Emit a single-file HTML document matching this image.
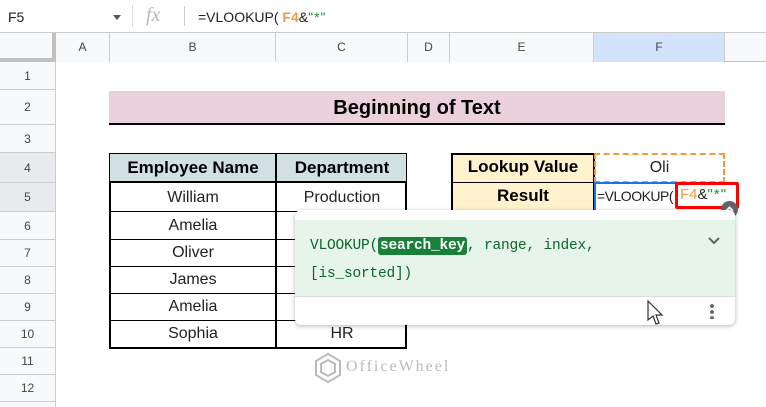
<!DOCTYPE html><html><head><style>
*{margin:0;padding:0;box-sizing:border-box}
body{width:766px;height:407px;overflow:hidden;background:#fff;font-family:"Liberation Sans",Arial,sans-serif;position:relative}
.a{position:absolute}
.hd{background:#f8f9fa;color:#444;font-size:12px;text-align:center}
.c{position:absolute;text-align:center;font-size:15px;color:#222}
</style></head><body>
<div class="a" style="left:0;top:0;width:766px;height:33px;background:#fff;border-bottom:1px solid #ccc"></div>
<div class="a" style="left:8px;top:9px;font-size:14px;color:#222">F5</div>
<div class="a" style="left:113px;top:15px;width:0;height:0;border-left:4px solid transparent;border-right:4px solid transparent;border-top:5px solid #555"></div>
<div class="a" style="left:132px;top:5px;width:1px;height:22px;background:#ddd"></div>
<div class="a" style="left:146px;top:4px;font-family:'Liberation Serif',serif;font-style:italic;font-size:20px;color:#bbb">fx</div>
<div class="a" style="left:184px;top:6px;width:1px;height:20px;background:#ccc"></div>
<div class="a" style="left:198px;top:9px;font-size:14px;color:#222">=VLOOKUP( <span style="color:#f29b3b;font-weight:bold">F4</span>&amp;<span style="color:#1e8e3e;letter-spacing:1px">"*"</span></div>
<div class="a hd" style="left:0;top:33px;width:766px;height:29px;border-bottom:1px solid #c0c0c0"></div>
<div class="a" style="left:0;top:33px;width:56px;height:29px;background:#f8f9fa;border-right:4px solid #c0c0c0;border-bottom:4px solid #c0c0c0"></div>
<div class="a hd" style="left:56px;top:33px;width:54px;height:29px;line-height:29px;border-right:1px solid #ccc">A</div>
<div class="a hd" style="left:110px;top:33px;width:166px;height:29px;line-height:29px;border-right:1px solid #ccc">B</div>
<div class="a hd" style="left:276px;top:33px;width:132px;height:29px;line-height:29px;border-right:1px solid #ccc">C</div>
<div class="a hd" style="left:408px;top:33px;width:42px;height:29px;line-height:29px;border-right:1px solid #ccc">D</div>
<div class="a hd" style="left:450px;top:33px;width:144px;height:29px;line-height:29px;border-right:1px solid #ccc">E</div>
<div class="a hd" style="left:594px;top:33px;width:131px;height:29px;line-height:29px;border-right:1px solid #ccc;background:#d3e3fd">F</div>
<div class="a" style="left:0;top:62px;width:56px;height:345px;background:#f8f9fa;border-right:1px solid #ccc"></div>
<div class="a hd" style="left:0;top:63px;width:55px;height:27px;line-height:27px;border-bottom:1px solid #ccc">1</div>
<div class="a hd" style="left:0;top:90px;width:55px;height:35px;line-height:35px;border-bottom:1px solid #ccc">2</div>
<div class="a hd" style="left:0;top:125px;width:55px;height:28px;line-height:28px;border-bottom:1px solid #ccc">3</div>
<div class="a hd" style="left:0;top:153px;width:55px;height:30px;line-height:30px;border-bottom:1px solid #ccc;background:#e8eaed">4</div>
<div class="a hd" style="left:0;top:183px;width:55px;height:29px;line-height:29px;border-bottom:1px solid #ccc;background:#e8eaed">5</div>
<div class="a hd" style="left:0;top:212px;width:55px;height:28px;line-height:28px;border-bottom:1px solid #ccc">6</div>
<div class="a hd" style="left:0;top:240px;width:55px;height:27px;line-height:27px;border-bottom:1px solid #ccc">7</div>
<div class="a hd" style="left:0;top:267px;width:55px;height:27px;line-height:27px;border-bottom:1px solid #ccc">8</div>
<div class="a hd" style="left:0;top:294px;width:55px;height:27px;line-height:27px;border-bottom:1px solid #ccc">9</div>
<div class="a hd" style="left:0;top:321px;width:55px;height:27px;line-height:27px;border-bottom:1px solid #ccc">10</div>
<div class="a hd" style="left:0;top:348px;width:55px;height:27px;line-height:27px;border-bottom:1px solid #ccc">11</div>
<div class="a hd" style="left:0;top:375px;width:55px;height:27px;line-height:27px;border-bottom:1px solid #ccc">12</div>
<div class="a" style="left:109px;top:91px;width:616px;height:34px;background:#ead1dc;border-bottom:2px solid #000;text-align:center;line-height:34px;font-weight:bold;font-size:20px;color:#000">Beginning of Text</div>
<div class="a" style="left:109px;top:153px;width:298px;height:196px;border:2px solid #000"></div>
<div class="a" style="left:110px;top:154px;width:296px;height:29px;background:#d0e0e3;border-bottom:2px solid #000"></div>
<div class="a" style="left:275px;top:153px;width:2px;height:196px;background:#000"></div>
<div class="c" style="left:110px;top:158px;width:166px;font-weight:bold;font-size:17px;color:#000">Employee Name</div>
<div class="c" style="left:277px;top:158px;width:130px;font-weight:bold;font-size:17px;color:#000">Department</div>
<div class="a" style="left:110px;top:211px;width:296px;height:1px;background:#000"></div>
<div class="a" style="left:110px;top:239px;width:296px;height:1px;background:#000"></div>
<div class="a" style="left:110px;top:266px;width:296px;height:1px;background:#000"></div>
<div class="a" style="left:110px;top:293px;width:296px;height:1px;background:#000"></div>
<div class="a" style="left:110px;top:320px;width:296px;height:1px;background:#000"></div>
<div class="c" style="left:110px;top:189px;width:166px;font-size:16px">William</div>
<div class="c" style="left:277px;top:189px;width:130px;font-size:16px">Production</div>
<div class="c" style="left:110px;top:217px;width:166px;font-size:16px">Amelia</div>
<div class="c" style="left:110px;top:244px;width:166px;font-size:16px">Oliver</div>
<div class="c" style="left:110px;top:271px;width:166px;font-size:16px">James</div>
<div class="c" style="left:110px;top:298px;width:166px;font-size:16px">Amelia</div>
<div class="c" style="left:110px;top:325px;width:166px;font-size:16px">Sophia</div>
<div class="c" style="left:277px;top:325px;width:130px;font-size:16px">HR</div>
<div class="a" style="left:451px;top:153px;width:144px;height:59px;background:#fff2cc;border:2px solid #000"></div>
<div class="a" style="left:451px;top:182px;width:144px;height:1px;background:#000"></div>
<div class="c" style="left:451px;top:157px;width:144px;font-weight:bold;font-size:17px;color:#000">Lookup Value</div>
<div class="c" style="left:451px;top:186px;width:144px;font-weight:bold;font-size:17px;color:#000">Result</div>
<div class="a" style="left:594px;top:153px;width:131px;height:30px;border:2px dashed #f29b3b"></div>
<div class="c" style="left:594px;top:159px;width:131px;font-size:16px">Oli</div>
<div class="a" style="left:594px;top:182px;width:131px;height:30px;border:2px solid #1a73e8;border-right:none"></div>
<div class="a" style="left:597px;top:188px;font-size:14px;color:#222;letter-spacing:-0.5px">=VLOOKUP(</div>
<div class="a" style="left:675px;top:182px;width:64px;height:27px;border:3px solid #f00;border-radius:2px;background:#fff"></div>
<div class="a" style="left:680px;top:186px;font-size:15px;color:#f29b3b">F4<span style="color:#222">&amp;</span><span style="color:#1e8e3e;letter-spacing:1px">"*"</span></div>
<div class="a" style="left:721px;top:201px;width:17px;height:17px;border-radius:50%;background:#5f6368"></div>
<svg class="a" style="left:721px;top:201px" width="17" height="17"><path d="M5 10 L8.5 6.5 L12 10" fill="none" stroke="#fff" stroke-width="2"/></svg>
<div class="a" style="left:295px;top:210px;width:440px;height:115px;background:#fff;border-radius:6px;box-shadow:0 1px 4px rgba(0,0,0,.3)"></div>
<div class="a" style="left:295px;top:220px;width:440px;height:77px;background:#e6f4ea;border-bottom:1px solid #dadce0"></div>
<div class="a" style="left:310px;top:232px;font-family:'Liberation Mono',monospace;font-size:14.5px;color:#0d652d;line-height:28px;letter-spacing:-0.2px">VLOOKUP(<span style="background:#188038;color:#fff;font-weight:bold;border-radius:3px;padding:1px 2px">search_key</span>, range, index,<br>[is_sorted])</div>
<svg class="a" style="left:706px;top:235px" width="16" height="12"><path d="M3 3 L8 8 L13 3" fill="none" stroke="#5f6368" stroke-width="2"/></svg>
<div class="a" style="left:710px;top:303px;width:4px;height:16px;background:radial-gradient(circle,#5f6368 1.8px,transparent 2px) 0 0/4px 6px"></div>
<svg class="a" style="left:646px;top:300px" width="20" height="26" viewBox="0 0 20 26"><path d="M2 1 L2 20 L7 16 L10 24 L13 23 L10 15 L16 15 Z" fill="#fff" stroke="#333" stroke-width="1.2"/></svg>
<svg class="a" style="left:313px;top:352px" width="30" height="32" viewBox="0 0 30 32"><path d="M15 2 L27 9 L27 23 L15 30 L3 23 L3 9 Z M15 8 L22 12 L22 20 L15 24 L8 20 L8 12 Z" fill="none" stroke="#bbb" stroke-width="2"/></svg>
<div class="a" style="left:346px;top:358px;font-family:'Liberation Serif',serif;font-size:16px;letter-spacing:2px;color:#bbb">OfficeWheel</div>
</body></html>
